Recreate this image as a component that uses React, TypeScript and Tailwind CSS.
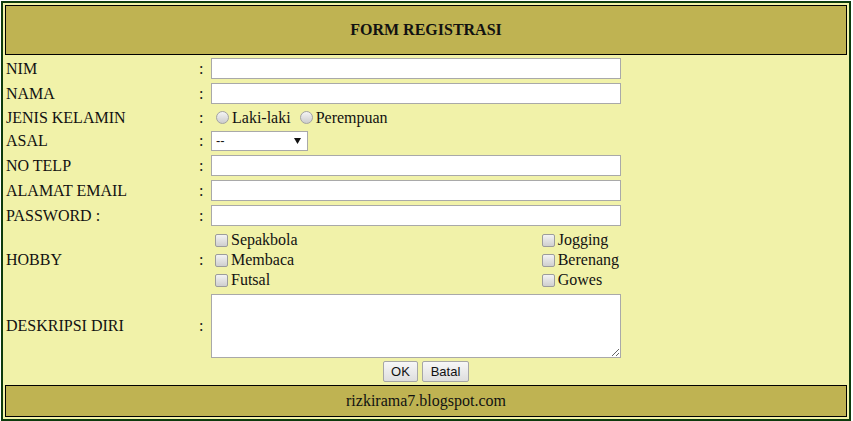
import { ReactNode } from "react";

const hobbies = ["Sepakbola", "Jogging", "Membaca", "Berenang", "Futsal", "Gowes"];

function Radio() {
  return (
    <span className="inline-block w-[13px] h-[13px] ml-[5px] mr-[3px] rounded-full border border-[#a3a3a3] bg-linear-to-b from-[#f4f4f4] to-[#cdcdcd]" />
  );
}

function Checkbox() {
  return (
    <span className="inline-block w-[13px] h-[13px] ml-[4px] mr-[3px] rounded-[2px] border border-[#9c9c9c] bg-linear-to-b from-[#f3f3f3] to-[#cfcfcf]" />
  );
}

function Row({ label, h, children }: { label: string; h: string; children: ReactNode }) {
  return (
    <div className={`grid grid-cols-[191px_10px_1fr] gap-x-[2px] items-center ${h}`}>
      <div className="p-[1px] leading-[18px]">{label}</div>
      <div className="p-[1px] leading-[18px]">:</div>
      <div className="p-[1px] flex items-center">{children}</div>
    </div>
  );
}

function TextInput({ type = "text" }: { type?: string }) {
  return (
    <input
      type={type}
      className="w-[410px] h-[21px] border border-[#a9a9a9] bg-white outline-none"
    />
  );
}

export default function App() {
  return (
    <div className="w-[853px] h-[421px] bg-white pt-[1px] pl-[1px] font-['Liberation_Serif',serif] text-[16px] text-[#111]">
      <div className="w-[850px] border-2 border-[#0d3b0d] bg-[#f1f2a9] p-[2px] flex flex-col gap-[2px]">
        {/* header */}
        <div className="h-[50px] border border-black bg-[#bfb352] flex items-center justify-center font-bold">
          FORM REGISTRASI
        </div>

        <Row label="NIM" h="h-[23px]">
          <TextInput />
        </Row>
        <Row label="NAMA" h="h-[23px]">
          <TextInput />
        </Row>
        <Row label="JENIS KELAMIN" h="h-[21px]">
          <div className="flex items-center leading-[18px]">
            <Radio />
            <span>Laki-laki</span>
            <span className="w-[4px]" />
            <Radio />
            <span>Perempuan</span>
          </div>
        </Row>
        <Row label="ASAL" h="h-[22px]">
          <div className="relative w-[97px] h-[20px] border border-[#a9a9a9] bg-white font-['Liberation_Sans',sans-serif] text-[13px] leading-[18px] pl-[4px]">
            --
            <svg className="absolute right-[6px] top-[6px]" width="7" height="6" viewBox="0 0 7 6">
              <path d="M0 0h7L3.5 6z" fill="#111" />
            </svg>
          </div>
        </Row>
        <Row label="NO TELP" h="h-[23px]">
          <TextInput />
        </Row>
        <Row label="ALAMAT EMAIL" h="h-[23px]">
          <TextInput type="email" />
        </Row>
        <Row label="PASSWORD :" h="h-[23px]">
          <TextInput type="password" />
        </Row>
        <Row label="HOBBY" h="h-[62px]">
          <div className="w-[410px] grid grid-cols-[1fr_auto]">
            {hobbies.map((hb) => (
              <div key={hb} className="h-[20px] flex items-center leading-[18px] pr-[2px]">
                <Checkbox />
                <span>{hb}</span>
              </div>
            ))}
          </div>
        </Row>
        <Row label="DESKRIPSI DIRI" h="h-[65px]">
          <textarea className="w-[410px] h-[64px] border border-[#a9a9a9] bg-white outline-none resize" />
        </Row>

        {/* buttons */}
        <div className="h-[23px] flex items-center justify-center gap-[4px] font-['Liberation_Sans',sans-serif] text-[13px]">
          <button className="w-[35px] h-[21px] rounded-[2px] border border-[#a6a6a6] bg-linear-to-b from-[#f7f7f7] to-[#dedede]">
            OK
          </button>
          <button className="w-[47px] h-[21px] rounded-[2px] border border-[#a6a6a6] bg-linear-to-b from-[#f7f7f7] to-[#dedede]">
            Batal
          </button>
        </div>

        {/* footer */}
        <div className="h-[32px] border border-black bg-[#bfb352] flex items-center justify-center">
          rizkirama7.blogspot.com
        </div>
      </div>
    </div>
  );
}
